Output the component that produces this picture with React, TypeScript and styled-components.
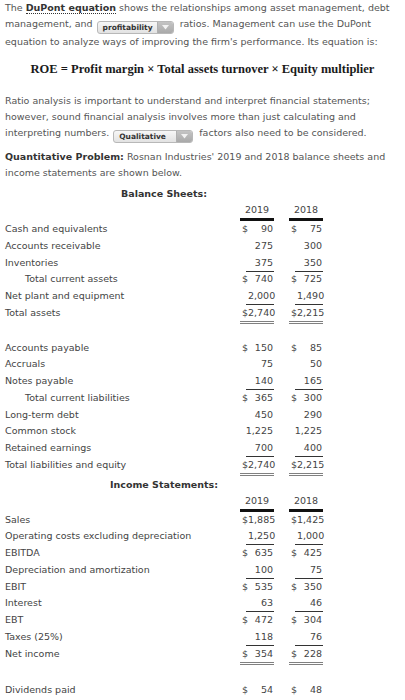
import React from "react";
import styled, { createGlobalStyle } from "styled-components";

const GlobalStyle = createGlobalStyle`
  html, body { margin: 0; padding: 0; background: #ffffff; }
  body {
    font-family: "DejaVu Sans", Verdana, sans-serif;
    font-size: 9.5px;
    color: #555555;
  }
`;

const Page = styled.div`
  width: 405px;
  padding: 0 5px;
  box-sizing: border-box;
`;

const Para = styled.p<{ $mt?: number }>`
  margin: ${(p) => p.$mt ?? 0}px 0 0 0;
  line-height: 16px;
`;

const Term = styled.span`
  font-weight: bold;
  color: #333333;
  border-bottom: 1px dotted #333333;
`;

const Strong = styled.span`
  font-weight: bold;
  color: #333333;
`;

const Select = styled.span<{ $w: number }>`
  display: inline-flex;
  align-items: stretch;
  width: ${(p) => p.$w}px;
  height: 13px;
  vertical-align: -3px;
  margin: 0 3px 0 1px;
  border: 1px solid #b8b8b8;
  border-radius: 3px;
  background: linear-gradient(#f7f7f7, #e2e2e2);
  box-sizing: border-box;
  overflow: hidden;
`;

const SelectText = styled.span`
  flex: 1;
  padding-left: 5px;
  font-size: 7.5px;
  font-weight: bold;
  line-height: 11px;
  color: #333333;
`;

const SelectArrow = styled.span`
  width: 15px;
  display: flex;
  align-items: center;
  justify-content: center;
  background: linear-gradient(#c4c4c4, #a9a9a9);
  border-left: 1px solid #b0b0b0;
`;

const Equation = styled.div`
  margin: 9px 0 14px;
  text-align: center;
  font-family: "Liberation Serif", "Times New Roman", serif;
  font-weight: bold;
  font-size: 12.5px;
  line-height: 20px;
  color: #1a1a1a;
`;

const Title = styled.div<{ $mt: number }>`
  margin-top: ${(p) => p.$mt}px;
  width: 318px;
  text-align: center;
  font-weight: bold;
  color: #333333;
  line-height: 16px;
`;

const Row = styled.div<{ $h?: number }>`
  display: grid;
  grid-template-columns: 235px 34px 15px 34px;
  height: ${(p) => p.$h ?? 16.75}px;
  color: #444444;
`;

const Label = styled.div<{ $indent?: boolean }>`
  padding-left: ${(p) => (p.$indent ? 20 : 0)}px;
  line-height: 16px;
  white-space: nowrap;
`;

const Year = styled.div`
  line-height: 16px;
  text-align: center;
  border-bottom: 3px solid #111111;
`;

type Line = "single" | "double" | undefined;

const Value = styled.div<{ $line: Line }>`
  display: flex;
  justify-content: space-between;
  box-sizing: border-box;
  height: 100%;
  line-height: 16px;
  padding: 0 1px 0 2px;
  margin-left: ${(p) => (p.$line === "single" ? 6 : 0)}px;
  border-bottom: ${(p) =>
    p.$line === "single"
      ? "1px solid #333333"
      : p.$line === "double"
      ? "3px double #808080"
      : "none"};
`;

const Gap = styled.div<{ $h: number }>`
  height: ${(p) => p.$h}px;
`;

type R = {
  label: string;
  a: string;
  b: string;
  dollar?: boolean;
  indent?: boolean;
  line?: Line;
};

const balanceA: R[] = [
  { label: "Cash and equivalents", a: "90", b: "75", dollar: true },
  { label: "Accounts receivable", a: "275", b: "300" },
  { label: "Inventories", a: "375", b: "350", line: "single" },
  { label: "Total current assets", a: "740", b: "725", dollar: true, indent: true },
  { label: "Net plant and equipment", a: "2,000", b: "1,490", line: "single" },
  { label: "Total assets", a: "2,740", b: "2,215", dollar: true, line: "double" },
];

const balanceL: R[] = [
  { label: "Accounts payable", a: "150", b: "85", dollar: true },
  { label: "Accruals", a: "75", b: "50" },
  { label: "Notes payable", a: "140", b: "165", line: "single" },
  { label: "Total current liabilities", a: "365", b: "300", dollar: true, indent: true },
  { label: "Long-term debt", a: "450", b: "290" },
  { label: "Common stock", a: "1,225", b: "1,225" },
  { label: "Retained earnings", a: "700", b: "400", line: "single" },
  { label: "Total liabilities and equity", a: "2,740", b: "2,215", dollar: true, line: "double" },
];

const income: R[] = [
  { label: "Sales", a: "1,885", b: "1,425", dollar: true },
  { label: "Operating costs excluding depreciation", a: "1,250", b: "1,000", line: "single" },
  { label: "EBITDA", a: "635", b: "425", dollar: true },
  { label: "Depreciation and amortization", a: "100", b: "75", line: "single" },
  { label: "EBIT", a: "535", b: "350", dollar: true },
  { label: "Interest", a: "63", b: "46", line: "single" },
  { label: "EBT", a: "472", b: "304", dollar: true },
  { label: "Taxes (25%)", a: "118", b: "76", line: "single" },
  { label: "Net income", a: "354", b: "228", dollar: true, line: "double" },
];

const dividends: R = { label: "Dividends paid", a: "54", b: "48", dollar: true };

const Arrow = () => (
  <svg width="7" height="5" viewBox="0 0 7 5">
    <path d="M0 0 L7 0 L3.5 4.5 Z" fill="#f2f2f2" />
  </svg>
);

const DataRow = ({ r }: { r: R }) => (
  <Row>
    <Label $indent={r.indent}>{r.label}</Label>
    <Value $line={r.line}>
      <span>{r.dollar ? "$" : ""}</span>
      <span>{r.a}</span>
    </Value>
    <div />
    <Value $line={r.line}>
      <span>{r.dollar ? "$" : ""}</span>
      <span>{r.b}</span>
    </Value>
  </Row>
);

const HeaderRow = () => (
  <Row $h={19}>
    <div />
    <Year>2019</Year>
    <div />
    <Year>2018</Year>
  </Row>
);

export default function App() {
  return (
    <Page>
      <GlobalStyle />
      <Para>
        The <Term>DuPont equation</Term> shows the relationships among asset management, debt
        management, and{" "}
        <Select $w={77}>
          <SelectText>profitability</SelectText>
          <SelectArrow>
            <Arrow />
          </SelectArrow>
        </Select>{" "}
        ratios. Management can use the DuPont equation to analyze ways of improving the firm's
        performance. Its equation is:
      </Para>
      <Equation>ROE = Profit margin × Total assets turnover × Equity multiplier</Equation>
      <Para>
        Ratio analysis is important to understand and interpret financial statements; however,
        sound financial analysis involves more than just calculating and interpreting numbers.{" "}
        <Select $w={80}>
          <SelectText>Qualitative</SelectText>
          <SelectArrow>
            <Arrow />
          </SelectArrow>
        </Select>{" "}
        factors also need to be considered.
      </Para>
      <Para $mt={6}>
        <Strong>Quantitative Problem:</Strong> Rosnan Industries' 2019 and 2018 balance sheets and
        income statements are shown below.
      </Para>
      <Title $mt={5}>Balance Sheets:</Title>
      <HeaderRow />
      {balanceA.map((r) => (
        <DataRow key={r.label} r={r} />
      ))}
      <Gap $h={18} />
      {balanceL.map((r) => (
        <DataRow key={r.label} r={r} />
      ))}
      <Title $mt={3}>Income Statements:</Title>
      <HeaderRow />
      {income.map((r) => (
        <DataRow key={r.label} r={r} />
      ))}
      <Gap $h={20} />
      <DataRow r={dividends} />
    </Page>
  );
}
